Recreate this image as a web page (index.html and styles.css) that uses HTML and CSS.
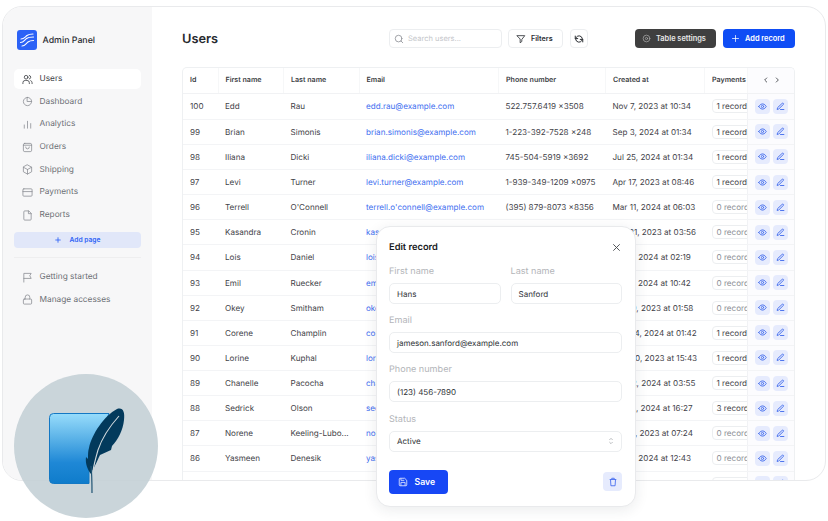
FILE: index.html
```html
<!DOCTYPE html>
<html lang="en">
<head>
<meta charset="utf-8">
<title>Admin Panel</title>
<link rel="stylesheet" href="styles.css">
</head>
<body>
<svg class="defs" width="0" height="0">
  <defs>
    <symbol id="i-eye" viewBox="0 0 24 24"><path d="M2 12s3.600-7 10-7 10 7 10 7-3.600 7-10 7-10-7-10-7z"/><circle cx="12" cy="12" r="3"/></symbol>
    <symbol id="i-edit" viewBox="0 0 24 24"><path d="M12 20h9"/><path d="M16.500 3.500a2.100 2.100 0 0 1 3 3L7 19l-4 1 1-4z"/></symbol>
  </defs>
</svg>
<div class="stage">
  <div class="frame">
    <aside class="sidebar">
      <div class="brand">
        <span class="logo"><svg viewBox="0 0 20 20" width="20" height="20"><path d="M4 9c3 0 4-2 6-3.500s3-1.500 6-1.500M3.500 12.500c3 0 4-2.500 6-4s4-1.500 7-1.500M5 16c3 0 4-2.500 6-4s3-1.500 5.500-1.500" fill="none" stroke="#fff" stroke-width="1.100" stroke-linecap="round"/></svg></span>
        <span class="brand-name">Admin Panel</span>
      </div>
      <nav class="nav">
        <a class="nav-item active"><svg class="nav-icon" viewBox="0 0 24 24"><circle cx="9" cy="7" r="4"/><path d="M2 21v-2a5 5 0 0 1 5-5h4a5 5 0 0 1 5 5v2"/><path d="M16 3.100a4 4 0 0 1 0 7.800"/><path d="M22 21v-2a5 5 0 0 0-3-4.600"/></svg>Users</a>
        <a class="nav-item"><svg class="nav-icon" viewBox="0 0 24 24"><path d="M21 12a9 9 0 1 1-9-9"/><path d="M12 3a9 9 0 0 1 9 9h-9z"/></svg>Dashboard</a>
        <a class="nav-item"><svg class="nav-icon" viewBox="0 0 24 24"><path d="M5 20v-7M12 20V5M19 20v-10"/></svg>Analytics</a>
        <a class="nav-item"><svg class="nav-icon" viewBox="0 0 24 24"><rect x="3" y="3" width="18" height="18" rx="3"/><path d="M3 7h18"/><path d="M8 11a4 4 0 0 0 8 0"/></svg>Orders</a>
        <a class="nav-item"><svg class="nav-icon" viewBox="0 0 24 24"><path d="M12 2l9 5v10l-9 5-9-5V7z"/><path d="M3 7l9 5 9-5M12 12v10"/></svg>Shipping</a>
        <a class="nav-item"><svg class="nav-icon" viewBox="0 0 24 24"><rect x="2" y="4" width="20" height="16" rx="2"/><path d="M2 10h20"/></svg>Payments</a>
        <a class="nav-item"><svg class="nav-icon" viewBox="0 0 24 24"><path d="M14 2H6a2 2 0 0 0-2 2v16a2 2 0 0 0 2 2h12a2 2 0 0 0 2-2V8z"/><path d="M14 2v6h6"/></svg>Reports</a>
      </nav>
      <button class="add-page"><svg class="plus-sm" viewBox="0 0 24 24"><path d="M12 4v16M4 12h16"/></svg>Add page</button>
      <div class="side-divider"></div>
      <nav class="nav">
        <a class="nav-item"><svg class="nav-icon" viewBox="0 0 24 24"><path d="M4 22V3h16l-3 5 3 6H4"/></svg>Getting started</a>
        <a class="nav-item"><svg class="nav-icon" viewBox="0 0 24 24"><rect x="3" y="11" width="18" height="11" rx="2"/><path d="M7 11V7a5 5 0 0 1 10 0v4"/></svg>Manage accesses</a>
      </nav>
    </aside>
    <main class="main">
      <header class="topbar">
        <h1 class="title">Users</h1>
        <label class="search"><svg class="tool-icon muted" viewBox="0 0 24 24"><circle cx="11" cy="11" r="8"/><path d="M21 21l-4.300-4.300"/></svg><span>Search users...</span></label>
        <button class="tool filters"><svg class="tool-icon" viewBox="0 0 24 24"><path d="M3 4h18l-7 9v5l-4 3v-8z"/></svg>Filters</button>
        <button class="tool refresh"><svg class="tool-icon" viewBox="0 0 24 24"><path d="M20 11a8 8 0 0 0-14.500-3L3 11"/><path d="M3 5v6h6"/><path d="M4 13a8 8 0 0 0 14.500 3L21 13"/><path d="M21 19v-6h-6"/></svg></button>
        <button class="primary-dark"><svg class="tool-icon" viewBox="0 0 24 24"><circle cx="12" cy="12" r="3"/><circle cx="12" cy="12" r="9"/></svg>Table settings</button>
        <button class="primary"><svg class="tool-icon" viewBox="0 0 24 24"><path d="M12 4v16M4 12h16"/></svg>Add record</button>
      </header>
      <div class="table-wrap">
        <table class="users">
          <colgroup>
            <col class="c-id"><col class="c-first"><col class="c-last"><col class="c-email"><col class="c-phone"><col class="c-created"><col class="c-pay"><col class="c-act">
          </colgroup>
          <thead>
            <tr>
              <th>Id</th><th>First name</th><th>Last name</th><th>Email</th><th>Phone number</th><th>Created at</th><th>Payments</th>
              <th class="act"><span class="pager"><svg viewBox="0 0 24 24"><path d="M15 5l-7 7 7 7"/></svg><svg viewBox="0 0 24 24"><path d="M9 5l7 7-7 7"/></svg></span></th>
            </tr>
          </thead>
          <tbody>
            <tr><td>100</td><td>Edd</td><td>Rau</td><td class="mail">edd.rau@example.com</td><td>522.757.6419 x3508</td><td>Nov 7, 2023 at 10:34</td><td class="pay"><span class="badge">1 record</span></td><td class="act"><span class="acts"><span class="act-btn"><svg><use href="#i-eye"/></svg></span><span class="act-btn"><svg><use href="#i-edit"/></svg></span></span></td></tr>
            <tr><td>99</td><td>Brian</td><td>Simonis</td><td class="mail">brian.simonis@example.com</td><td>1-223-392-7528 x248</td><td>Sep 3, 2024 at 01:34</td><td class="pay"><span class="badge">1 record</span></td><td class="act"><span class="acts"><span class="act-btn"><svg><use href="#i-eye"/></svg></span><span class="act-btn"><svg><use href="#i-edit"/></svg></span></span></td></tr>
            <tr><td>98</td><td>Iliana</td><td>Dicki</td><td class="mail">iliana.dicki@example.com</td><td>745-504-5919 x3692</td><td>Jul 25, 2024 at 01:34</td><td class="pay"><span class="badge">1 record</span></td><td class="act"><span class="acts"><span class="act-btn"><svg><use href="#i-eye"/></svg></span><span class="act-btn"><svg><use href="#i-edit"/></svg></span></span></td></tr>
            <tr><td>97</td><td>Levi</td><td>Turner</td><td class="mail">levi.turner@example.com</td><td>1-939-349-1209 x0975</td><td>Apr 17, 2023 at 08:46</td><td class="pay"><span class="badge">1 record</span></td><td class="act"><span class="acts"><span class="act-btn"><svg><use href="#i-eye"/></svg></span><span class="act-btn"><svg><use href="#i-edit"/></svg></span></span></td></tr>
            <tr><td>96</td><td>Terrell</td><td>O'Connell</td><td class="mail">terrell.o'connell@example.com</td><td>(395) 879-8073 x8356</td><td>Mar 11, 2024 at 06:03</td><td class="pay"><span class="badge zero">0 record</span></td><td class="act"><span class="acts"><span class="act-btn"><svg><use href="#i-eye"/></svg></span><span class="act-btn"><svg><use href="#i-edit"/></svg></span></span></td></tr>
            <tr><td>95</td><td>Kasandra</td><td>Cronin</td><td class="mail">kasandra.cronin@example.com</td><td>591-204-1187</td><td>Jun 21, 2023 at 03:56</td><td class="pay"><span class="badge zero">0 record</span></td><td class="act"><span class="acts"><span class="act-btn"><svg><use href="#i-eye"/></svg></span><span class="act-btn"><svg><use href="#i-edit"/></svg></span></span></td></tr>
            <tr><td>94</td><td>Lois</td><td>Daniel</td><td class="mail">lois.daniel@example.com</td><td>812-330-4471</td><td>Feb 9, 2024 at 02:19</td><td class="pay"><span class="badge zero">0 record</span></td><td class="act"><span class="acts"><span class="act-btn"><svg><use href="#i-eye"/></svg></span><span class="act-btn"><svg><use href="#i-edit"/></svg></span></span></td></tr>
            <tr><td>93</td><td>Emil</td><td>Ruecker</td><td class="mail">emil.ruecker@example.com</td><td>640-118-2093</td><td>Jan 6, 2024 at 10:42</td><td class="pay"><span class="badge zero">0 record</span></td><td class="act"><span class="acts"><span class="act-btn"><svg><use href="#i-eye"/></svg></span><span class="act-btn"><svg><use href="#i-edit"/></svg></span></span></td></tr>
            <tr><td>92</td><td>Okey</td><td>Smitham</td><td class="mail">okey.smitham@example.com</td><td>703-556-9021</td><td>Oct 19, 2023 at 01:58</td><td class="pay"><span class="badge zero">0 record</span></td><td class="act"><span class="acts"><span class="act-btn"><svg><use href="#i-eye"/></svg></span><span class="act-btn"><svg><use href="#i-edit"/></svg></span></span></td></tr>
            <tr><td>91</td><td>Corene</td><td>Champlin</td><td class="mail">corene.champlin@example.com</td><td>415-782-6630</td><td>Mar 24, 2024 at 01:42</td><td class="pay"><span class="badge">1 record</span></td><td class="act"><span class="acts"><span class="act-btn"><svg><use href="#i-eye"/></svg></span><span class="act-btn"><svg><use href="#i-edit"/></svg></span></span></td></tr>
            <tr><td>90</td><td>Lorine</td><td>Kuphal</td><td class="mail">lorine.kuphal@example.com</td><td>928-441-0375</td><td>Aug 30, 2023 at 15:43</td><td class="pay"><span class="badge">1 record</span></td><td class="act"><span class="acts"><span class="act-btn"><svg><use href="#i-eye"/></svg></span><span class="act-btn"><svg><use href="#i-edit"/></svg></span></span></td></tr>
            <tr><td>89</td><td>Chanelle</td><td>Pacocha</td><td class="mail">chanelle.pacocha@example.com</td><td>360-275-8814</td><td>Apr 12, 2024 at 03:55</td><td class="pay"><span class="badge">1 record</span></td><td class="act"><span class="acts"><span class="act-btn"><svg><use href="#i-eye"/></svg></span><span class="act-btn"><svg><use href="#i-edit"/></svg></span></span></td></tr>
            <tr><td>88</td><td>Sedrick</td><td>Olson</td><td class="mail">sedrick.olson@example.com</td><td>507-669-3142</td><td>May 8, 2024 at 16:27</td><td class="pay"><span class="badge">3 record</span></td><td class="act"><span class="acts"><span class="act-btn"><svg><use href="#i-eye"/></svg></span><span class="act-btn"><svg><use href="#i-edit"/></svg></span></span></td></tr>
            <tr><td>87</td><td>Norene</td><td>Keeling-Lubo...</td><td class="mail">norene.keeling@example.com</td><td>254-913-7706</td><td>Dec 4, 2023 at 07:24</td><td class="pay"><span class="badge zero">0 record</span></td><td class="act"><span class="acts"><span class="act-btn"><svg><use href="#i-eye"/></svg></span><span class="act-btn"><svg><use href="#i-edit"/></svg></span></span></td></tr>
            <tr><td>86</td><td>Yasmeen</td><td>Denesik</td><td class="mail">yasmeen.denesik@example.com</td><td>618-340-2259</td><td>Feb 3, 2024 at 12:43</td><td class="pay"><span class="badge zero">0 record</span></td><td class="act"><span class="acts"><span class="act-btn"><svg><use href="#i-eye"/></svg></span><span class="act-btn"><svg><use href="#i-edit"/></svg></span></span></td></tr>
            <tr><td>85</td><td>Cecilia</td><td>Kirlin</td><td class="mail">cecilia.kirlin@example.com</td><td>772-108-4463</td><td>Nov 2, 2023 at 01:36</td><td class="pay"><span class="badge">1 record</span></td><td class="act"><span class="acts"><span class="act-btn"><svg><use href="#i-eye"/></svg></span><span class="act-btn"><svg><use href="#i-edit"/></svg></span></span></td></tr>
          </tbody>
        </table>
      </div>
    </main>
  </div>

  <section class="modal">
    <div class="modal-head">
      <h2>Edit record</h2>
      <svg class="close" viewBox="0 0 24 24"><path d="M5 5l14 14M19 5L5 19"/></svg>
    </div>
    <div class="form-row">
      <div class="field"><span class="label">First name</span><div class="input">Hans</div></div>
      <div class="field"><span class="label">Last name</span><div class="input">Sanford</div></div>
    </div>
    <div class="field"><span class="label">Email</span><div class="input">jameson.sanford@example.com</div></div>
    <div class="field"><span class="label">Phone number</span><div class="input">(123) 456-7890</div></div>
    <div class="field"><span class="label">Status</span><div class="input select">Active<svg class="updown" viewBox="0 0 24 24"><path d="M7 9l5-5 5 5M7 15l5 5 5-5"/></svg></div></div>
    <div class="modal-foot">
      <button class="save"><svg viewBox="0 0 24 24"><path d="M19 21H5a2 2 0 0 1-2-2V5a2 2 0 0 1 2-2h11l5 5v11a2 2 0 0 1-2 2z"/><path d="M17 21v-8H7v8M7 3v5h8"/></svg>Save</button>
      <span class="trash"><svg viewBox="0 0 24 24"><path d="M4 6h16M9 6V3h6v3M6 6l1 15h10l1-15"/></svg></span>
    </div>
  </section>

  <div class="sqlite-badge">
    <svg viewBox="0 0 144 144" width="144" height="144">
      <defs>
        <linearGradient id="sq" x1="0" y1="0" x2="0" y2="1">
          <stop offset="0" stop-color="#97dcfb"/>
          <stop offset="0.35" stop-color="#5cb3e8"/>
          <stop offset="0.7" stop-color="#1f88d6"/>
          <stop offset="1" stop-color="#0f7ccb"/>
        </linearGradient>
      </defs>
      <path d="M39.500 39.500H95L75 90V109.500H39.500a4 4 0 0 1-4-4V43.500a4 4 0 0 1 4-4z" fill="url(#sq)" stroke="#1378c4"/>
      <path d="M103 35C109 33 111 38 110 46C109 56 104 66 98 72L97 76L86 81L85 83C82 90 79 95 77 100C74 96 71 90 72 83L74 85C74 80 74 77 75 74C78 60 90 42 103 35Z" fill="#033a5c"/>
      <path d="M105 42C96 52 88 64 84 76C82 83 80 90 79 97" fill="none" stroke="#cfd8dc" stroke-width="1.100"/>
      <path d="M77 92C78 101 78 110 78 119" fill="none" stroke="#1f5373" stroke-width="1.200"/>
    </svg>
  </div>
</div>
</body>
</html>
```

FILE: styles.css
```css
* { box-sizing: border-box; }
html, body { margin: 0; padding: 0; }
body {
  width: 828px;
  height: 521px;
  overflow: hidden;
  background: #fff;
  font-family: "Inter", "Liberation Sans", sans-serif;
  font-size: 9px;
  color: #33373d;
  text-rendering: geometricPrecision;
}
.defs { position: absolute; }
.stage { position: relative; width: 828px; height: 521px; padding: 6px 2px 40px; }
.frame {
  display: flex;
  width: 824px;
  height: 475px;
  border: 1px solid #e9eaec;
  border-radius: 20px;
  overflow: hidden;
  background: #fff;
}

/* sidebar */
.sidebar {
  flex: 0 0 149px;
  background: #f7f7f8;
  padding: 23px 11px 0 11px;
  display: flex;
  flex-direction: column;
}
.brand { display: flex; align-items: center; gap: 5.500px; padding-left: 3px; height: 20px; margin-bottom: 19px; }
.logo { width: 20px; height: 20px; border-radius: 3px; background: #2c62f6; display: block; }
.logo svg { display: block; }
.brand-name { font-size: 8.800px; font-weight: 500; color: #2b2e33; }
.nav { display: flex; flex-direction: column; gap: 2.700px; }
.nav-item {
  display: flex;
  align-items: center;
  gap: 6.500px;
  height: 20px;
  padding-left: 8px;
  border-radius: 5px;
  font-size: 8.300px;
  color: #6c6f75;
}
.nav-item.active { background: #fff; color: #3b3e44; }
.nav-icon { width: 11px; height: 11px; fill: none; stroke: #8a8d93; stroke-width: 1.700; stroke-linecap: round; stroke-linejoin: round; flex: none; }
.active .nav-icon { stroke: #33363b; }
.add-page {
  display: flex;
  align-items: center;
  justify-content: center;
  gap: 7px;
  height: 16px;
  margin-top: 7px;
  border: 0;
  border-radius: 4px;
  background: #e1e7f9;
  color: #2c62f6;
  font: 600 6.700px "Inter", sans-serif;
  padding: 0;
}
.plus-sm { width: 8px; height: 8px; fill: none; stroke: #2c62f6; stroke-width: 2.500; }
.side-divider { height: 1px; background: #eeeeef; margin: 9px 0 9px; }

/* main */
.main { flex: 1; min-width: 0; padding: 22px 30px 0 30px; display: flex; flex-direction: column; }
.topbar { display: flex; align-items: center; height: 19px; margin-bottom: 19px; flex: none; }
.title { margin: 2px 0 0; font-size: 12.800px; font-weight: 600; color: #26292e; flex: 0 0 207px; }
.search, .tool {
  display: flex;
  align-items: center;
  height: 19px;
  background: #fff;
  border: 1px solid #eceef0;
  border-radius: 4px;
  padding: 0;
}
.search { width: 113px; padding-left: 4px; gap: 4px; color: #c4c6ca; font-size: 7.500px; margin-right: 6px; }
.tool-icon { width: 10px; height: 10px; fill: none; stroke: currentColor; stroke-width: 2; stroke-linecap: round; stroke-linejoin: round; flex: none; }
.tool-icon.muted { color: #8f9297; }
.tool { font: 600 7.200px "Inter", sans-serif; color: #2d3035; }
.filters { width: 55px; padding-left: 7px; gap: 5px; margin-right: 7px; }
.refresh { width: 18px; justify-content: center; margin-right: 47px; }
.refresh .tool-icon { stroke-width: 2.400; }
.primary-dark, .primary {
  display: flex;
  align-items: center;
  height: 19px;
  border: 0;
  border-radius: 4px;
  color: #fff;
  font: 600 7.400px "Inter", sans-serif;
  padding: 0;
}
.primary-dark { width: 81px; background: #3f3f3f; color: #e8e8e8; padding-left: 7px; gap: 5px; margin-right: 7px; }
.primary { width: 72px; background: #0f4df5; padding-left: 8px; gap: 5px; }
.primary .tool-icon { width: 9px; height: 9px; }
.primary-dark .tool-icon { color: #a8a8a8; width: 9px; height: 9px; }

/* table */
.table-wrap {
  flex: 1;
  min-height: 0;
  overflow: hidden;
  border: 1px solid #eef0f2;
  border-bottom: 0;
  border-radius: 5px 5px 0 0;
}
.users { width: 611px; border-collapse: collapse; table-layout: fixed; font-size: 8.100px; }
.c-id { width: 35px; } .c-first { width: 65.500px; } .c-last { width: 75.500px; } .c-email { width: 139.500px; }
.c-phone { width: 107px; } .c-created { width: 99px; } .c-pay { width: 43px; } .c-act { width: 46.500px; }
.users th {
  height: 25px;
  padding: 0 0 1px 7px;
  text-align: left;
  font-size: 7.100px;
  font-weight: 600;
  color: #3a3d42;
  border-bottom: 1px solid #f1f2f4;
  border-right: 1px solid #f6f7f8;
  white-space: nowrap;
  overflow: hidden;
}
.users td {
  height: 25.140px;
  padding: 0 0 0 7px;
  border-bottom: 1px solid #f3f4f6;
  white-space: nowrap;
  overflow: hidden;
  color: #3f4248;
}
.users tbody tr:first-child td { height: 26.300px; }
.users .mail { color: #3f6ff0; }
.badge {
  display: inline-block;
  height: 14px;
  line-height: 12px;
  width: 50px;
  padding-left: 4px;
  border: 1px solid #eceef0;
  border-radius: 4px;
  font-size: 8.100px;
  color: #3f4248;
}
.badge.zero { color: #8b8e94; }
.users .act { padding: 0; background: #fcfcfe; border-left: 1px solid #f1f2f5; border-right: 0; }
.pager { display: flex; justify-content: center; gap: 3px; }
.pager svg { width: 8px; height: 8px; fill: none; stroke: #3a3d42; stroke-width: 2.500; }
.acts { display: flex; gap: 2.500px; padding-left: 7px; }
.act-btn { width: 15px; height: 15px; border-radius: 4px; background: #e6ebfd; display: flex; align-items: center; justify-content: center; }
.act-btn svg { width: 9px; height: 9px; fill: none; stroke: #4a72ee; stroke-width: 2.600; stroke-linecap: round; stroke-linejoin: round; }

/* modal */
.modal {
  position: absolute;
  left: 376px;
  top: 226px;
  width: 260px;
  height: 281px;
  padding: 13px 13px 0 12px;
  background: #fff;
  border: 1px solid #e9eaec;
  border-radius: 14px;
  box-shadow: 0 3px 14px rgba(30, 40, 60, .09);
}
.modal-head { display: flex; justify-content: space-between; align-items: center; height: 14px; margin-bottom: 12px; }
.modal-head h2 { margin: 0; font-size: 9.300px; font-weight: 600; color: #17191c; }
.close { width: 11px; height: 11px; fill: none; stroke: #45484d; stroke-width: 2; }
.form-row { display: flex; gap: 10px; }
.form-row .field { flex: 1; }
.field { margin-bottom: 11.200px; }
.label { display: block; font-size: 9.100px; color: #b3b5b9; line-height: 12px; margin-bottom: 5px; }
.input {
  display: flex;
  align-items: center;
  height: 21px;
  padding-left: 7px;
  border: 1px solid #eceef0;
  border-radius: 5px;
  font-size: 8px;
  color: #2d3035;
}
.select { justify-content: space-between; padding-right: 6px; }
.updown { width: 8px; height: 8px; fill: none; stroke: #9a9da2; stroke-width: 2; }
.modal-foot { display: flex; justify-content: space-between; align-items: center; margin-top: 18px; }
.save {
  display: flex;
  align-items: center;
  gap: 6.500px;
  width: 59px;
  height: 24px;
  padding: 0 0 0 9px;
  border: 0;
  border-radius: 4px;
  background: #1747f5;
  color: #fff;
  font: 600 8.700px "Inter", sans-serif;
}
.save svg { width: 10px; height: 10px; fill: none; stroke: #e6ebff; stroke-width: 2; }
.trash { width: 19px; height: 19px; border-radius: 4px; background: #e6ebfd; display: flex; align-items: center; justify-content: center; }
.trash svg { width: 10px; height: 10px; fill: none; stroke: #3d66ee; stroke-width: 2; }

/* floating badge */
.sqlite-badge {
  position: absolute;
  left: 14px;
  top: 374px;
  width: 144px;
  height: 144px;
  border-radius: 50%;
  background: rgba(196, 208, 214, .9);
}
.sqlite-badge svg { display: block; }
```
